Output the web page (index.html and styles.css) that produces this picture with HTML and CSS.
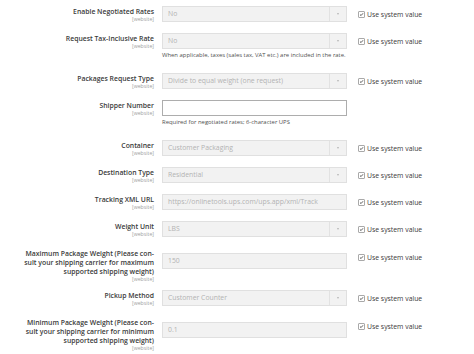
FILE: index.html
```html
<!DOCTYPE html>
<html>
<head>
<meta charset="utf-8">
<link rel="stylesheet" href="styles.css">
</head>
<body>
<div class="config">
  <div class="row">
    <div class="label"><span class="name">Enable Negotiated Rates</span><span class="scope">[website]</span></div>
    <div class="value"><div class="control select"><span class="text">No</span><span class="arrow"></span></div></div>
    <div class="use"><span class="cb"><svg viewBox="0 0 7 7"><path d="M1.4 3.6 L2.9 5 L5.6 1.8"/></svg></span>Use system value</div>
  </div>
  <div class="row">
    <div class="label"><span class="name">Request Tax-Inclusive Rate</span><span class="scope">[website]</span></div>
    <div class="value"><div class="control select"><span class="text">No</span><span class="arrow"></span></div>
      <p class="note">When applicable, taxes (sales tax, VAT etc.) are included in the rate.</p></div>
    <div class="use"><span class="cb"><svg viewBox="0 0 7 7"><path d="M1.4 3.6 L2.9 5 L5.6 1.8"/></svg></span>Use system value</div>
  </div>
  <div class="row">
    <div class="label"><span class="name">Packages Request Type</span><span class="scope">[website]</span></div>
    <div class="value"><div class="control select"><span class="text">Divide to equal weight (one request)</span><span class="arrow"></span></div></div>
    <div class="use"><span class="cb"><svg viewBox="0 0 7 7"><path d="M1.4 3.6 L2.9 5 L5.6 1.8"/></svg></span>Use system value</div>
  </div>
  <div class="row">
    <div class="label"><span class="name">Shipper Number</span><span class="scope">[website]</span></div>
    <div class="value"><div class="control input editable"><span class="text"></span></div>
      <p class="note">Required for negotiated rates; 6-character UPS</p></div>
  </div>
  <div class="row">
    <div class="label"><span class="name">Container</span><span class="scope">[website]</span></div>
    <div class="value"><div class="control select"><span class="text">Customer Packaging</span><span class="arrow"></span></div></div>
    <div class="use"><span class="cb"><svg viewBox="0 0 7 7"><path d="M1.4 3.6 L2.9 5 L5.6 1.8"/></svg></span>Use system value</div>
  </div>
  <div class="row">
    <div class="label"><span class="name">Destination Type</span><span class="scope">[website]</span></div>
    <div class="value"><div class="control select"><span class="text">Residential</span><span class="arrow"></span></div></div>
    <div class="use"><span class="cb"><svg viewBox="0 0 7 7"><path d="M1.4 3.6 L2.9 5 L5.6 1.8"/></svg></span>Use system value</div>
  </div>
  <div class="row">
    <div class="label"><span class="name">Tracking XML URL</span><span class="scope">[website]</span></div>
    <div class="value"><div class="control input"><span class="text">https://onlinetools.ups.com/ups.app/xml/Track</span></div></div>
    <div class="use"><span class="cb"><svg viewBox="0 0 7 7"><path d="M1.4 3.6 L2.9 5 L5.6 1.8"/></svg></span>Use system value</div>
  </div>
  <div class="row">
    <div class="label"><span class="name">Weight Unit</span><span class="scope">[website]</span></div>
    <div class="value"><div class="control select"><span class="text">LBS</span><span class="arrow"></span></div></div>
    <div class="use"><span class="cb"><svg viewBox="0 0 7 7"><path d="M1.4 3.6 L2.9 5 L5.6 1.8"/></svg></span>Use system value</div>
  </div>
  <div class="row tall">
    <div class="label"><span class="name">Maximum Package Weight (Please con-<br>sult your shipping carrier for maximum<br>supported shipping weight)</span><span class="scope">[website]</span></div>
    <div class="value"><div class="control input"><span class="text">150</span></div></div>
    <div class="use"><span class="cb"><svg viewBox="0 0 7 7"><path d="M1.4 3.6 L2.9 5 L5.6 1.8"/></svg></span>Use system value</div>
  </div>
  <div class="row">
    <div class="label"><span class="name">Pickup Method</span><span class="scope">[website]</span></div>
    <div class="value"><div class="control select"><span class="text">Customer Counter</span><span class="arrow"></span></div></div>
    <div class="use"><span class="cb"><svg viewBox="0 0 7 7"><path d="M1.4 3.6 L2.9 5 L5.6 1.8"/></svg></span>Use system value</div>
  </div>
  <div class="row tall">
    <div class="label"><span class="name">Minimum Package Weight (Please con-<br>sult your shipping carrier for minimum<br>supported shipping weight)</span><span class="scope">[website]</span></div>
    <div class="value"><div class="control input"><span class="text">0.1</span></div></div>
    <div class="use"><span class="cb"><svg viewBox="0 0 7 7"><path d="M1.4 3.6 L2.9 5 L5.6 1.8"/></svg></span>Use system value</div>
  </div>
</div>
</body>
</html>
```

FILE: styles.css
```css
html, body {
  margin: 0;
  background: #ffffff;
}

body {
  font-family: "Open Sans", "DejaVu Sans", sans-serif;
  color: #303030;
}

.config {
  padding-top: 6px;
}

.row {
  display: grid;
  grid-template-columns: 154px 185px auto;
  column-gap: 8px;
  align-items: start;
  margin-bottom: 11px;
}

.label {
  text-align: right;
  padding-top: 1px;
}

.label .name {
  display: block;
  font-size: 6.85px;
  font-weight: 600;
  line-height: 9px;
  color: #3a3a3a;
}

.label .scope {
  display: block;
  font-size: 5.2px;
  line-height: 6px;
  color: #a0a0a0;
}

.control {
  box-sizing: border-box;
  height: 16px;
  display: flex;
  align-items: stretch;
  border: 1px solid #e0e0e0;
  background: #f2f2f2;
  color: #b3b3b3;
  font-size: 6.85px;
  line-height: 14px;
}

.control .text {
  flex: 1;
  padding-left: 5px;
  white-space: nowrap;
  overflow: hidden;
}

.control.editable {
  background: #ffffff;
  border-color: #adadad;
}

.select .arrow {
  width: 16px;
  border-left: 1px solid #e2e2e2;
  display: flex;
  align-items: center;
  justify-content: center;
}

.select .arrow::after {
  content: "";
  width: 0;
  height: 0;
  border-left: 1.5px solid transparent;
  border-right: 1.5px solid transparent;
  border-top: 2px solid #b5b5b5;
}

.note {
  margin: 3px 0 3px;
  font-size: 5.9px;
  line-height: 7px;
  color: #505050;
  white-space: nowrap;
}

.use {
  margin-left: 3px;
  height: 16px;
  display: flex;
  align-items: center;
  font-size: 6.85px;
  color: #3a3a3a;
  white-space: nowrap;
}

.cb {
  box-sizing: border-box;
  width: 7px;
  height: 7px;
  border: 1px solid #a9a9a9;
  border-radius: 1px;
  background: #ffffff;
  margin-right: 2px;
  display: flex;
}

.cb svg {
  width: 100%;
  height: 100%;
  overflow: visible;
}

.cb path {
  fill: none;
  stroke: #303030;
  stroke-width: 1.1;
}

.row.tall {
  margin-top: 1px;
  margin-bottom: 8px;
}

.row.tall .value {
  padding-top: 5px;
}

.row.tall .use {
  height: 9px;
  margin-top: 5px;
}
```
